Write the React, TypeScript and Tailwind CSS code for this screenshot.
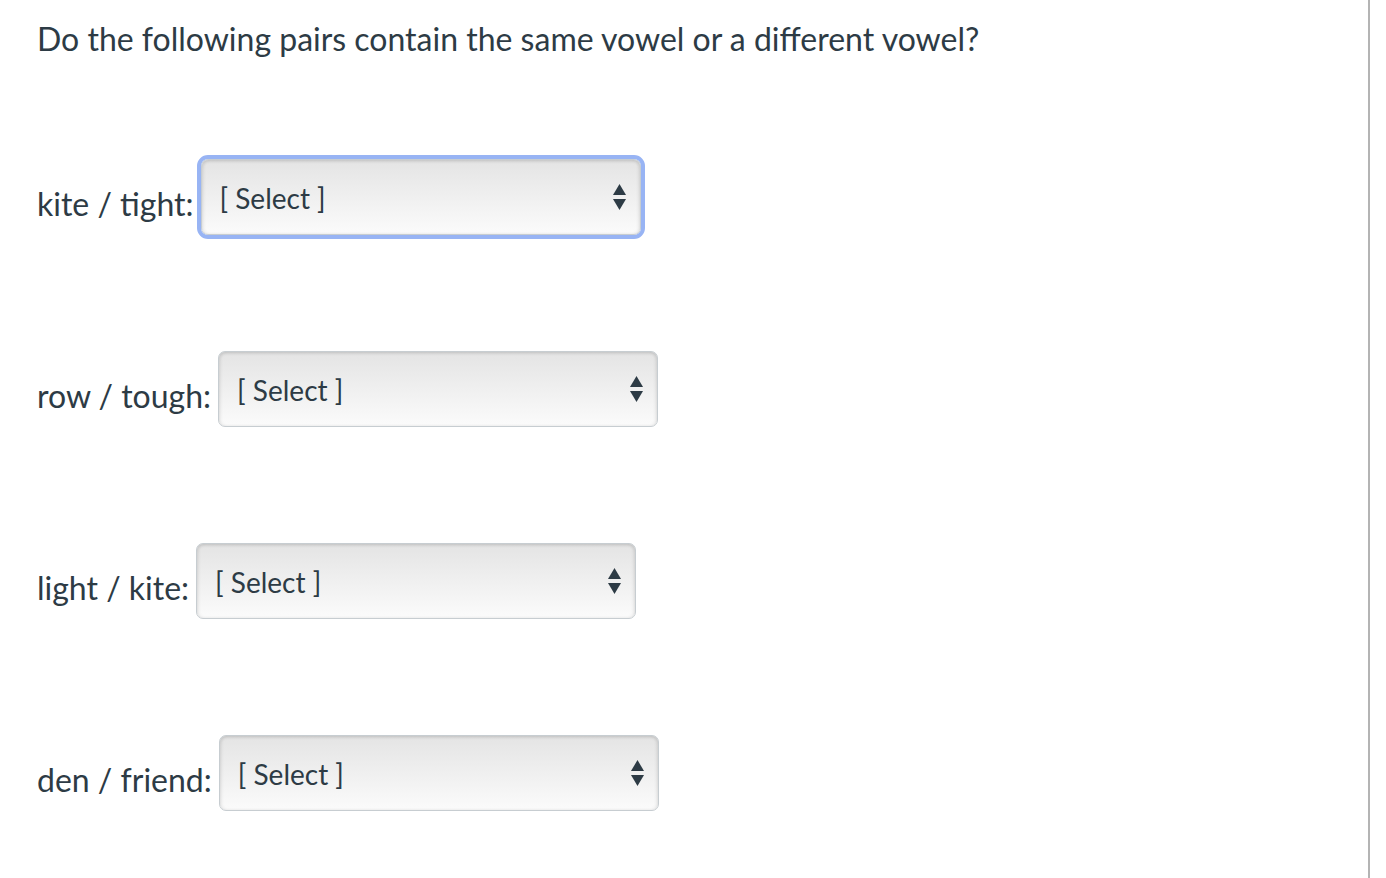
import React from 'react';

const pairs = [
  { label: 'kite / tight:', focused: true },
  { label: 'row / tough:', focused: false },
  { label: 'light / kite:', focused: false },
  { label: 'den / friend:', focused: false },
];

function Arrows() {
  return (
    <svg width="13" height="26" viewBox="0 0 13 26" aria-hidden="true">
      <path d="M6.5 0 L13 11 H0 Z" fill="#2d3b45" />
      <path d="M6.5 26 L13 15 H0 Z" fill="#2d3b45" />
    </svg>
  );
}

function FakeSelect({ focused }: { focused: boolean }) {
  return (
    <div
      className={
        'relative flex h-[76px] w-[440px] shrink-0 items-center justify-between rounded-[7px] border border-[#c7cdd1] bg-gradient-to-b from-[#e4e4e4] to-[#fbfbfb] pl-[18px] pr-[14px] shadow-[inset_0_2px_3px_rgba(0,0,0,0.08),inset_-2px_0_3px_rgba(0,0,0,0.06),inset_2px_0_3px_rgba(0,0,0,0.06)] ' +
        (focused ? 'outline-[4px] outline-solid outline-[#98b4f4] outline-offset-0' : '')
      }
    >
      <span className="mt-[1px] text-[28px] leading-none text-[#2d3b45]">[ Select ]</span>
      <Arrows />
    </div>
  );
}

export default function App() {
  return (
    <div className="relative min-h-[878px] w-[1386px] bg-white font-['Lato','Noto_Sans',sans-serif] text-[#2d3b45]">
      <div className="absolute right-[16px] top-0 h-full w-[2px] bg-[#b4b4b4]" />
      <div className="pl-[37px] pt-[17px]">
        <p className="text-[32px] leading-[44px]">Do the following pairs contain the same vowel or a different vowel?</p>
        <div className="mt-[98px] flex flex-col gap-[116px]">
          {pairs.map((p) => (
            <div key={p.label} className="flex items-center gap-[7px]">
              <span className="pt-[13px] text-[32px] leading-none">{p.label}</span>
              <FakeSelect focused={p.focused} />
            </div>
          ))}
        </div>
      </div>
    </div>
  );
}
